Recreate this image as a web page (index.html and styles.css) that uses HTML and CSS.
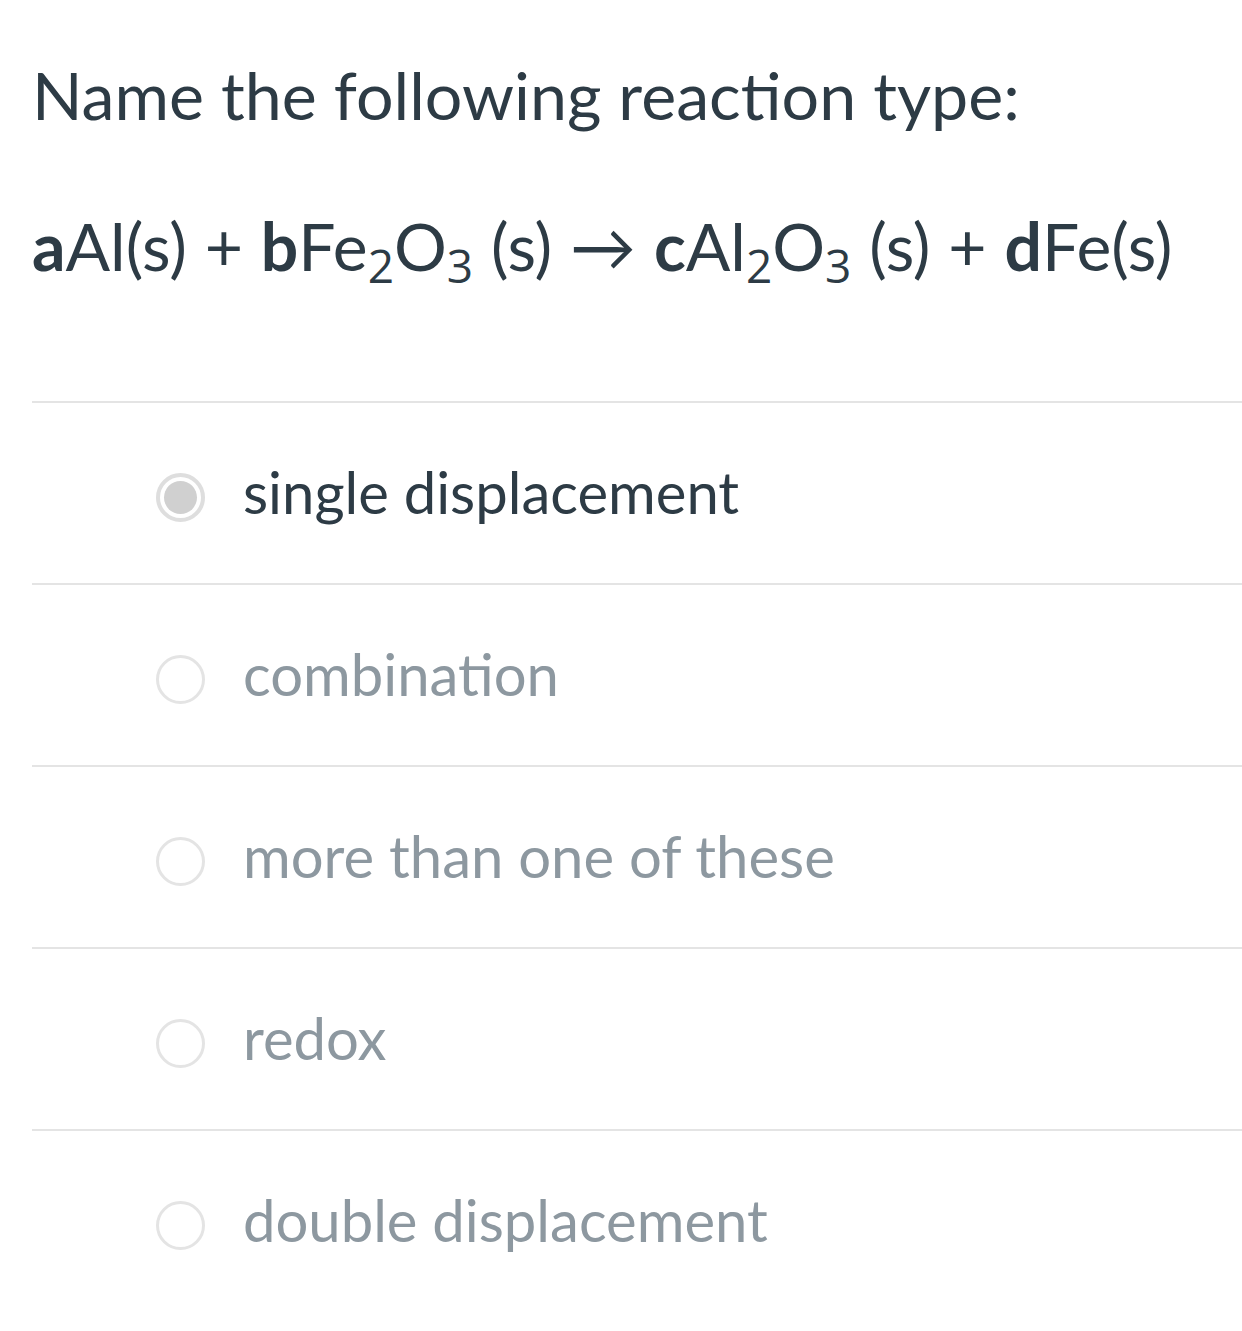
FILE: index.html
```html
<!DOCTYPE html>
<html>
<head>
<meta charset="utf-8">
<link rel="stylesheet" href="styles.css">
</head>
<body>
<div class="question">
  <p class="title">Name the following reaction type:</p>
  <p class="equation"><b>a</b>Al(s) + <b>b</b>Fe<span class="sub">2</span>O<span class="sub">3</span> (s) &rarr; <b>c</b>Al<span class="sub">2</span>O<span class="sub">3</span> (s) + <b>d</b>Fe(s)</p>
  <ul class="answers">
    <li class="answer selected"><span class="radio"></span><span class="label">single displacement</span></li>
    <li class="answer"><span class="radio"></span><span class="label">combination</span></li>
    <li class="answer"><span class="radio"></span><span class="label">more than one of these</span></li>
    <li class="answer"><span class="radio"></span><span class="label">redox</span></li>
    <li class="answer"><span class="radio"></span><span class="label">double displacement</span></li>
  </ul>
</div>
</body>
</html>
```
FILE: styles.css
```css
html, body {
  margin: 0;
  padding: 0;
  background: #ffffff;
}
body {
  font-family: Lato, "Noto Sans", sans-serif;
  color: #2d3b45;
}
.question {
  padding-left: 32px;
}
.title {
  margin: 0;
  padding-top: 55px;
  font-size: 66.3px;
  line-height: 80px;
}
.equation {
  margin: 0;
  padding-top: 66px;
  font-size: 66px;
  line-height: 90px;
  word-spacing: 1px;
}
.equation b {
  font-weight: 700;
}
.equation .sub {
  font-family: "Open Sans", Lato, sans-serif;
  font-size: 46px;
  vertical-align: -12px;
  line-height: 0;
}
.answers {
  list-style: none;
  margin: 110px 0 0 0;
  padding: 0;
  border-top: 2px solid #e4e4e4;
}
.answer {
  display: flex;
  align-items: center;
  height: 180px;
  border-bottom: 2px solid #e4e4e4;
  padding-left: 124px;
}
.answer:last-child {
  border-bottom: none;
}
.radio {
  width: 49px;
  height: 49px;
  border: 3px solid #e4e4e4;
  border-radius: 50%;
  box-sizing: border-box;
  flex: none;
  position: relative;
  top: 4px;
  background: #fff;
}
.selected .radio {
  border-width: 4px;
  border-color: #dedede;
}
.selected .radio::after {
  content: "";
  position: absolute;
  left: 4px;
  top: 4px;
  width: 33px;
  height: 33px;
  border-radius: 50%;
  background: #d0d0d0;
}
.label {
  margin-left: 38px;
  font-size: 58px;
  color: #8d98a0;
  position: relative;
  top: -2px;
}
.selected .label {
  color: #2d3b45;
}
```
